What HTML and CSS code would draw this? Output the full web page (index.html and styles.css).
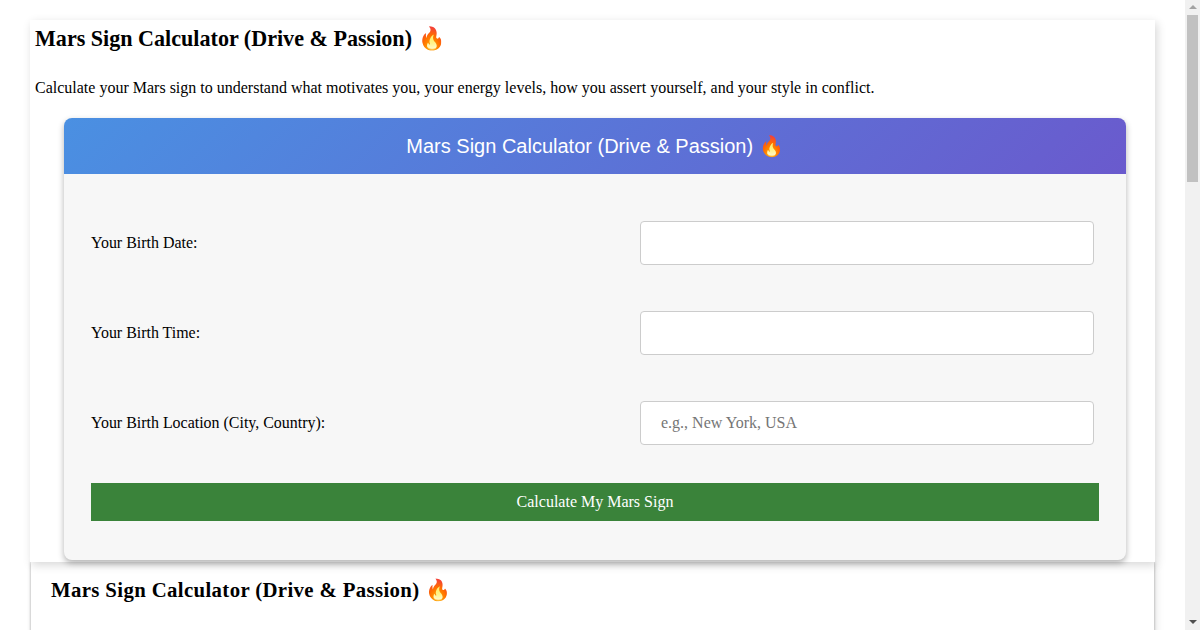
FILE: index.html
```html
<!DOCTYPE html>
<html lang="en">
<head>
  <meta charset="UTF-8">
  <meta name="viewport" content="width=device-width, initial-scale=1.0">
  <title>Mars Sign Calculator (Drive &amp; Passion)</title>
  <link rel="stylesheet" href="styles.css">
</head>
<body>
  <main class="page">
    <article class="intro">
      <h1>Mars Sign Calculator (Drive &amp; Passion) 🔥</h1>
      <p>Calculate your Mars sign to understand what motivates you, your energy levels, how you assert yourself, and your style in conflict.</p>

      <div class="calculator">
        <div class="calculator-header">Mars Sign Calculator (Drive &amp; Passion) 🔥</div>
        <form class="calculator-form">
          <div class="form-row">
            <label for="birth-date">Your Birth Date:</label>
            <input type="text" id="birth-date">
          </div>
          <div class="form-row">
            <label for="birth-time">Your Birth Time:</label>
            <input type="text" id="birth-time">
          </div>
          <div class="form-row">
            <label for="birth-location">Your Birth Location (City, Country):</label>
            <input type="text" id="birth-location" placeholder="e.g., New York, USA">
          </div>
          <button type="button" class="calculate-btn">Calculate My Mars Sign</button>
        </form>
      </div>
    </article>

    <section class="details">
      <h2>Mars Sign Calculator (Drive &amp; Passion) 🔥</h2>
    </section>
  </main>

  <div class="scrollbar">
    <span class="scroll-arrow up"></span>
    <span class="scroll-thumb"></span>
    <span class="scroll-arrow down"></span>
  </div>
</body>
</html>
```

FILE: styles.css
```css
body {
  margin: 0;
  background: #fff;
  color: #000;
  font-family: "Times New Roman", "Liberation Serif", serif;
  font-size: 16px;
}

.page {
  width: 1125px;
  margin-left: 30px;
  padding-top: 20px;
}

.intro {
  position: relative;
  padding: 1px 5px 2px;
  background: #fff;
  box-shadow: 2px 3px 9px rgba(0, 0, 0, 0.16);
}

h1 {
  margin: 5px 0 0;
  font-size: 22.1px;
  line-height: 26px;
}

.intro p {
  margin: 27px 0 0;
  line-height: 18px;
}

.calculator {
  width: 1062px;
  margin: 21px 0 0 29px;
  border-radius: 8px;
  background: #f7f7f7;
  box-shadow: 0 3px 6px rgba(0, 0, 0, 0.3);
}

.calculator-header {
  padding: 16px 0;
  border-radius: 8px 8px 0 0;
  background: linear-gradient(135deg, #4a90e2, #6a5acd);
  color: #fff;
  font-family: "Liberation Sans", Arial, sans-serif;
  font-size: 20px;
  line-height: 24px;
  text-align: center;
}

.calculator-form {
  padding: 47px 27px 39px;
}

.form-row {
  display: flex;
  align-items: center;
  justify-content: space-between;
  margin-bottom: 46px;
  padding-right: 5px;
}

.form-row:nth-child(3) {
  margin-bottom: 38px;
}

.form-row label {
  font-size: 15.95px;
}

.form-row input {
  box-sizing: border-box;
  width: 454px;
  height: 44px;
  padding: 10px 20px;
  border: 1px solid #ccc;
  border-radius: 4px;
  background: #fff;
  font-family: inherit;
  font-size: 16px;
}

.calculate-btn {
  display: block;
  width: 100%;
  height: 38px;
  border: none;
  background: #3a833a;
  color: #fff;
  font-family: inherit;
  font-size: 16px;
  cursor: pointer;
}

.details {
  width: 1083px;
  min-height: 1640px;
  margin-left: 1px;
  padding: 0 20px;
  background: #fff;
  box-shadow: 0 0 3px rgba(0, 0, 0, 0.35), 3px 2px 8px rgba(0, 0, 0, 0.08);
}

h2 {
  margin: 0;
  padding-top: 15px;
  font-size: 20.8px;
  line-height: 25px;
  letter-spacing: 0.36px;
}

/* page scrollbar, drawn over the page edge */
.scrollbar {
  position: fixed;
  top: 0;
  right: 0;
  bottom: 0;
  display: flex;
  flex-direction: column;
  align-items: center;
  width: 15px;
  background: #f1f1f1;
}

.scroll-arrow {
  flex: none;
  width: 0;
  height: 0;
  border-left: 4px solid transparent;
  border-right: 4px solid transparent;
}

.scroll-arrow.up {
  margin: 5px 0 6px;
  border-bottom: 4px solid #a3a3a3;
}

.scroll-thumb {
  flex: none;
  width: 11px;
  height: 167px;
  background: #c1c1c1;
}

.scroll-arrow.down {
  margin: auto 0 6px;
  border-top: 4px solid #505050;
}
```
